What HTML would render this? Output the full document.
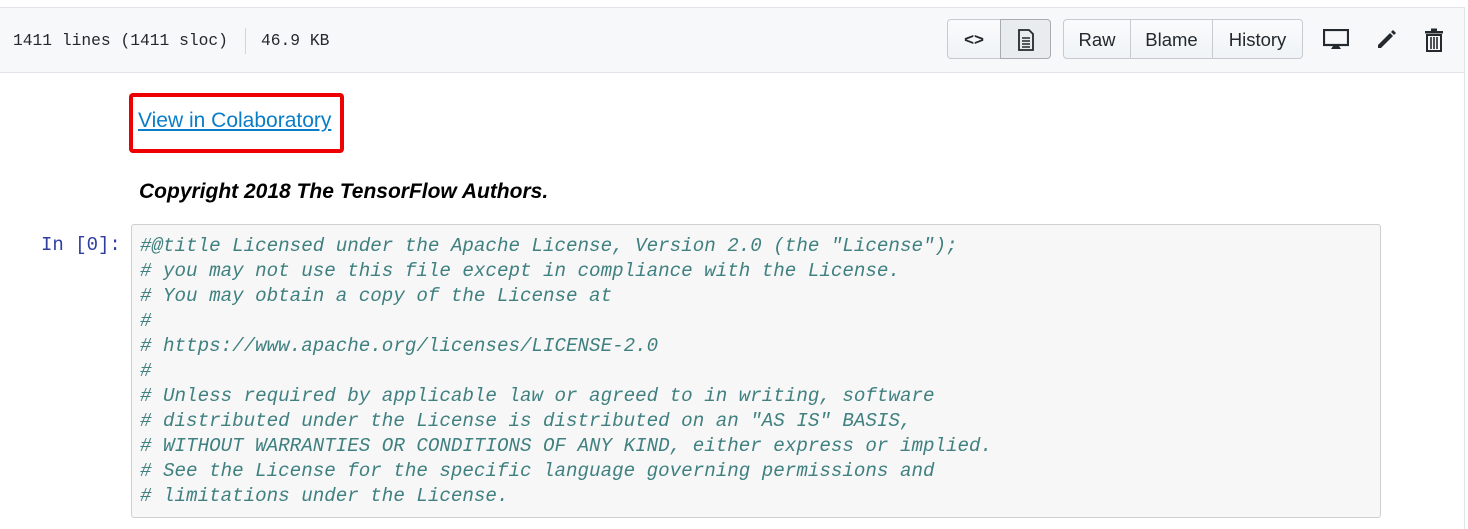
<!DOCTYPE html>
<html style="overflow:hidden;height:529px"><head><style>
body{margin:0;background:#fff;width:1468px;height:529px;overflow:hidden;position:relative;font-family:"Liberation Sans",sans-serif;}
.box{position:absolute;left:0;top:7px;width:1464px;height:530px;border:1px solid #e1e4e8;border-left:none;border-bottom:none;}
.hdr{position:absolute;left:0;top:8px;width:1464px;height:64px;background:#f6f8fa;border-bottom:1px solid #e1e4e8;}
.info{position:absolute;left:13px;top:31px;font-family:"Liberation Mono",monospace;font-size:16.3px;color:#24292e;}
.sep{position:absolute;left:245px;top:28px;width:1px;height:26px;background:#d1d5da;}
.btn{position:absolute;top:19px;height:40px;border:1px solid #c7cbd0;background:linear-gradient(#fafbfc,#eff3f6);box-sizing:border-box;font-size:18.5px;color:#24292e;display:flex;align-items:center;justify-content:center;padding-top:2px;}
.red{position:absolute;left:129px;top:93px;width:215px;height:60px;border:4px solid #e00;border-radius:4px;box-sizing:border-box;}
a{position:absolute;left:138px;top:109px;font-size:21px;color:#0a7dc8;text-decoration:underline;}
.copy{position:absolute;left:139px;top:180px;font-size:21px;font-weight:bold;font-style:italic;color:#000;}
.in{position:absolute;left:41px;top:234px;font-family:"Liberation Mono",monospace;font-size:19px;color:#303f9f;}
.code{position:absolute;left:131px;top:224px;width:1250px;height:294px;background:#f7f7f7;border:1px solid #cfcfcf;border-radius:3px;box-sizing:border-box;}
pre{position:absolute;left:140px;top:234px;margin:0;font-family:"Liberation Mono",monospace;font-size:19.2px;line-height:25px;font-style:italic;color:#408080;}
</style></head><body>
<div class="box"></div>
<div class="hdr"></div>
<div class="info">1411 lines (1411 sloc)</div>
<div class="sep"></div>
<div class="info" style="left:261px">46.9 KB</div>
<div class="btn" style="left:947px;width:54px;border-radius:4px 0 0 4px;font-weight:bold;font-size:17px">&lt;&gt;</div>
<div class="btn" style="left:1000px;width:51px;border-radius:0 4px 4px 0;background:#e9ecef;border-color:#a8acb0">
<svg width="18" height="22" viewBox="0 0 18 22"><path d="M2 1h10l4 4v16H2z" fill="none" stroke="#24292e" stroke-width="1.8"/><path d="M5 9h8M5 12h8M5 15h8M5 18h8" stroke="#24292e" stroke-width="1.5"/></svg></div>
<div class="btn" style="left:1063px;width:68px;border-radius:4px 0 0 4px">Raw</div>
<div class="btn" style="left:1130px;width:83px;border-radius:0">Blame</div>
<div class="btn" style="left:1212px;width:91px;border-radius:0 4px 4px 0">History</div>
<svg style="position:absolute;left:1323px;top:29px" width="26" height="22" viewBox="0 0 26 22"><rect x="1" y="1" width="24" height="15" fill="none" stroke="#24292e" stroke-width="2.2"/><path d="M8 20h10l-2-3h-6z" fill="#24292e"/></svg>
<svg style="position:absolute;left:1374px;top:28px" width="24" height="24" viewBox="0 0 24 24"><path d="M4 17L16 5l3 3L7 20H4z" fill="#24292e"/><path d="M17 4l2-2 3 3-2 2z" fill="#24292e"/></svg>
<svg style="position:absolute;left:1424px;top:28px" width="20" height="24" viewBox="0 0 20 24"><rect x="1" y="3" width="18" height="2.5" fill="#24292e"/><rect x="7" y="0.5" width="6" height="3" fill="#24292e"/><path d="M3 7h14v16H3z" fill="none" stroke="#24292e" stroke-width="2"/><path d="M7 9v12M10 9v12M13 9v12" stroke="#24292e" stroke-width="1.6"/></svg>
<div class="red"></div>
<a>View in Colaboratory</a>
<div class="copy">Copyright 2018 The TensorFlow Authors.</div>
<div class="in">In [0]:</div>
<div class="code"></div>
<pre>#@title Licensed under the Apache License, Version 2.0 (the "License");
# you may not use this file except in compliance with the License.
# You may obtain a copy of the License at
#
# https://www.apache.org/licenses/LICENSE-2.0
#
# Unless required by applicable law or agreed to in writing, software
# distributed under the License is distributed on an "AS IS" BASIS,
# WITHOUT WARRANTIES OR CONDITIONS OF ANY KIND, either express or implied.
# See the License for the specific language governing permissions and
# limitations under the License.</pre>
</body></html>
